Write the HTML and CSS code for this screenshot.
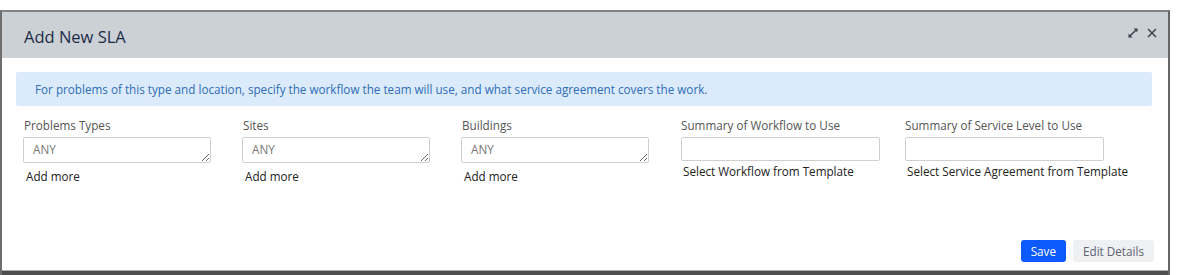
FILE: index.html
```html
<!DOCTYPE html>
<html lang="en">
<head>
    <meta charset="UTF-8">
    <title>Add New SLA</title>
    <link rel="stylesheet" href="styles.css">
</head>
<body>
    <div class="frame">
        <section class="modal">
            <header class="modal-head">
                <h1 class="modal-title">Add New SLA</h1>
                <div class="head-tools">
                    <svg class="tool" width="12" height="12" viewBox="0 0 12 12">
                        <path d="M2 10 L10 2" stroke="#3b4652" stroke-width="1.6"/>
                        <path d="M6.5 1.5 H10.5 V5.5 Z" fill="#3b4652"/>
                        <path d="M1.5 6.5 V10.5 H5.5 Z" fill="#3b4652"/>
                    </svg>
                    <svg class="tool" width="12" height="12" viewBox="0 0 12 12">
                        <path d="M2 2 L10 10 M10 2 L2 10" stroke="#3b4652" stroke-width="1.5"/>
                    </svg>
                </div>
            </header>

            <div class="modal-body">
                <div class="alert">For problems of this type and location, specify the workflow the team will use, and what service agreement covers the work.</div>

                <div class="fields">
                    <div class="field">
                        <label class="field-label">Problems Types</label>
                        <textarea class="area">ANY</textarea>
                        <a class="more">Add more</a>
                    </div>
                    <div class="field">
                        <label class="field-label">Sites</label>
                        <textarea class="area">ANY</textarea>
                        <a class="more">Add more</a>
                    </div>
                    <div class="field">
                        <label class="field-label">Buildings</label>
                        <textarea class="area">ANY</textarea>
                        <a class="more">Add more</a>
                    </div>
                    <div class="field">
                        <label class="field-label">Summary of Workflow to Use</label>
                        <input class="box" type="text">
                        <a class="pick">Select Workflow from Template</a>
                    </div>
                    <div class="field field-last">
                        <label class="field-label">Summary of Service Level to Use</label>
                        <input class="box" type="text">
                        <a class="pick">Select Service Agreement from Template</a>
                    </div>
                </div>

                <div class="actions">
                    <button class="btn btn-save">Save</button>
                    <button class="btn btn-edit">Edit Details</button>
                </div>
            </div>
        </section>
    </div>
</body>
</html>
```

FILE: styles.css
```css
body {
    margin: 0;
    background: #fff;
    font-family: "Open Sans", "Noto Sans", sans-serif;
    overflow: hidden;
}

.frame {
    margin-top: 10px;
    width: 1170px;
    height: 265px;
    box-sizing: border-box;
    border-top: 2px solid #828282;
    border-left: 2px solid #6e6e6e;
    border-right: 2px solid #666;
    background: #4e4e4e;
}

.modal {
    background: #fff;
    height: 258px;
    border-bottom: 1px solid #a9adb1;
    display: flex;
    flex-direction: column;
}

.modal-head {
    height: 46px;
    background: #ccd1d5;
    display: flex;
    align-items: center;
    justify-content: space-between;
    padding: 0 10px 0 22px;
}

.modal-title {
    margin: 0;
    font-size: 16.5px;
    font-weight: 500;
    color: #1c2a4a;
    padding-top: 2px;
}

.head-tools {
    display: flex;
    gap: 7px;
    margin-top: -4px;
}

.modal-body {
    flex: 1;
    display: flex;
    flex-direction: column;
    padding: 14px 14px 8px 14px;
}

.alert {
    height: 34px;
    box-sizing: border-box;
    margin-right: 2px;
    background: #dcebfb;
    border-radius: 2px;
    color: #2d6db5;
    font-size: 11.7px;
    line-height: 34px;
    padding-left: 19px;
}

.fields {
    display: flex;
    margin-top: 11px;
    padding-left: 8px;
}

.field {
    width: 219px;
    display: flex;
    flex-direction: column;
    align-items: flex-start;
    white-space: nowrap;
}

.field:nth-child(4) {
    width: 224px;
}

.field-last {
    width: 240px;
}

.field-label {
    font-size: 11.7px;
    line-height: 16px;
    color: #555;
    margin-bottom: 4px;
}

.area {
    width: 188px;
    height: 26px;
    box-sizing: border-box;
    border: 1px solid #cfcfcf;
    border-radius: 2px;
    font-family: inherit;
    font-size: 11.7px;
    color: #777;
    padding: 3px 9px;
    margin: 0 0 0 -1px;
    resize: vertical;
    overflow: hidden;
}

.box {
    width: 199px;
    height: 24px;
    box-sizing: border-box;
    border: 1px solid #cfcfcf;
    border-radius: 2px;
    margin: 0;
}

.more {
    font-size: 11.7px;
    line-height: 16px;
    color: #222;
    margin: 5px 0 0 2px;
}

.pick {
    font-size: 11.7px;
    line-height: 16px;
    color: #222;
    margin: 2px 0 0 2px;
}

.actions {
    margin-top: auto;
    display: flex;
    justify-content: flex-end;
    gap: 7px;
}

.btn {
    height: 22px;
    border: none;
    border-radius: 3px;
    font-family: inherit;
    font-size: 11.7px;
    padding: 0 10px;
    cursor: pointer;
}

.btn-save {
    background: #0d5bff;
    color: #fff;
}

.btn-edit {
    background: #eff0f2;
    color: #5e6470;
}
```
